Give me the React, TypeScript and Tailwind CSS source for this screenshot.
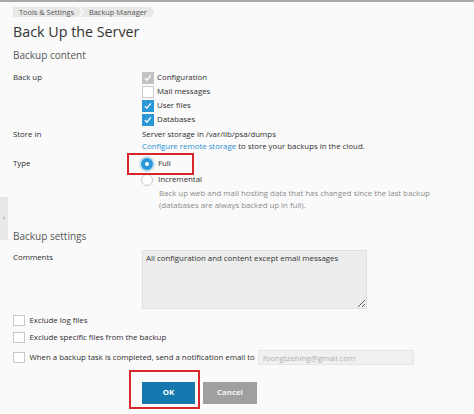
import React from "react";

function Check({ disabled = false, checked = false }: { disabled?: boolean; checked?: boolean }) {
  const base = "w-[11.5px] h-[11.5px] shrink-0 flex items-center justify-center border";
  if (!checked) {
    return <span className={`${base} bg-white border-[#c8c8c8]`} />;
  }
  return (
    <span
      className={`${base} ${
        disabled ? "bg-[#c2c2c2] border-[#c2c2c2]" : "bg-[#2a98d8] border-[#2a98d8]"
      }`}
    >
      <svg viewBox="0 0 12 12" className="w-[10px] h-[10px]">
        <path d="M2.3 6.2 L4.9 8.8 L9.8 2.8" fill="none" stroke="white" strokeWidth="1.6" />
      </svg>
    </span>
  );
}

function CheckRow({ label, checked, disabled }: { label: string; checked?: boolean; disabled?: boolean }) {
  return (
    <div className="h-[14px] flex items-center gap-[3.5px]">
      <Check checked={checked} disabled={disabled} />
      <span>{label}</span>
    </div>
  );
}

function Radio({ on }: { on?: boolean }) {
  if (on) {
    return (
      <span className="w-[12px] h-[12px] rounded-full bg-[#2a98d8] shadow-[0_0_0_2px_rgba(42,152,216,0.25)] flex items-center justify-center shrink-0">
        <span className="w-[4px] h-[4px] rounded-full bg-white" />
      </span>
    );
  }
  return <span className="w-[12px] h-[12px] rounded-full bg-white border border-[#c8c8c8] shrink-0" />;
}

export default function App() {
  return (
    <div className="relative w-[474px] h-[414px] overflow-hidden bg-[#fafafa] text-[#2e2e2e] text-[7.85px] font-['Open_Sans',sans-serif]">
      <div className="h-[2px] bg-[#a9a9a9]" />

      {/* sidebar toggle */}
      <div className="absolute left-0 top-[197px] w-[8px] h-[43px] bg-[#e8e8e8] flex items-center justify-center text-[#777] text-[7px]">
        ‹
      </div>

      <div className="pl-[13px]">
        {/* breadcrumb */}
        <div className="mt-[5px] flex h-[10px] text-[7.4px] leading-[10px] text-[#555]">
          <span className="bg-[#e8e8e8] pl-[6px] pr-[8px] [clip-path:polygon(0_0,calc(100%_-_4px)_0,100%_50%,calc(100%_-_4px)_100%,0_100%)]">
            Tools &amp; Settings
          </span>
          <span className="-ml-[2px] bg-[#e8e8e8] pl-[9px] pr-[8px] [clip-path:polygon(0_0,calc(100%_-_4px)_0,100%_50%,calc(100%_-_4px)_100%,0_100%,4px_50%)]">
            Backup Manager
          </span>
        </div>

        <h1 className="mt-[6px] text-[14.3px] leading-[18px] text-[#333]">Back Up the Server</h1>

        <h2 className="mt-[7px] text-[10px] leading-[14px] text-[#555]">Backup content</h2>

        <div className="mt-[9px] grid grid-cols-[129px_1fr]">
          <div className="h-[14px] flex items-center">Back up</div>
          <div>
            <CheckRow label="Configuration" checked disabled />
            <CheckRow label="Mail messages" />
            <CheckRow label="User files" checked />
            <CheckRow label="Databases" checked />
          </div>
        </div>

        <div className="mt-[2px] grid grid-cols-[129px_1fr] leading-[11.5px]">
          <div>Store in</div>
          <div>
            <div>Server storage in /var/lib/psa/dumps</div>
            <div>
              <span className="text-[#2b8fd3]">Configure remote storage</span> to store your backups in the cloud.
            </div>
          </div>
        </div>

        <div className="mt-[3px] grid grid-cols-[129px_1fr]">
          <div className="h-[17px] flex items-center">Type</div>
          <div>
            <div className="relative h-[17px] flex items-center gap-[5px] -ml-[1px]">
              <Radio on />
              <span>Full</span>
              <span className="absolute left-[-14px] top-[-2px] w-[67px] h-[22px] border-2 border-[#d8262d]" />
            </div>
            <div className="h-[16px] flex items-center gap-[5px] -ml-[1px]">
              <Radio />
              <span>Incremental</span>
            </div>
            <div className="pl-[17px] -mt-[1px] leading-[12px] text-[#8a8a8a]">
              Back up web and mail hosting data that has changed since the last backup
              <br />
              (databases are always backed up in full).
            </div>
          </div>
        </div>

        <h2 className="mt-[18px] text-[10px] leading-[14px] text-[#555]">Backup settings</h2>

        <div className="mt-[7px] grid grid-cols-[129px_1fr]">
          <div className="leading-[15px]">Comments</div>
          <textarea
            readOnly
            defaultValue="All configuration and content except email messages"
            className="w-[225px] h-[59px] bg-[#ededed] border border-[#e0e0e0] px-[3px] py-[2px] leading-[11px] text-[7.85px] text-[#333] outline-none"
          />
        </div>

        <div className="mt-[3px] h-[17px] flex items-center gap-[5px]">
          <Check />
          <span>Exclude log files</span>
        </div>
        <div className="h-[17px] flex items-center gap-[5px]">
          <Check />
          <span>Exclude specific files from the backup</span>
        </div>
        <div className="mt-[3px] h-[17px] flex items-center gap-[5px]">
          <Check />
          <span>When a backup task is completed, send a notification email to</span>
          <input
            disabled
            placeholder="foongtzehing@gmail.com"
            className="-ml-[2px] w-[156px] h-[15px] bg-[#f0f0f0] border border-[#e6e6e6] px-[4px] text-[7.85px] placeholder:text-[#b0b0b0]"
          />
        </div>

        <div className="mt-[16px] pl-[129px] flex gap-[8px]">
          <div className="relative">
            <button className="w-[53px] h-[22px] bg-[#1579b0] text-white font-bold text-[7.85px]">OK</button>
            <span className="absolute left-[-13px] top-[-12px] w-[71px] h-[39px] border-2 border-[#d8262d]" />
          </div>
          <button className="w-[54px] h-[22px] bg-[#9f9f9f] text-[#f2f2f2] font-bold text-[7.85px]">Cancel</button>
        </div>
      </div>
    </div>
  );
}
